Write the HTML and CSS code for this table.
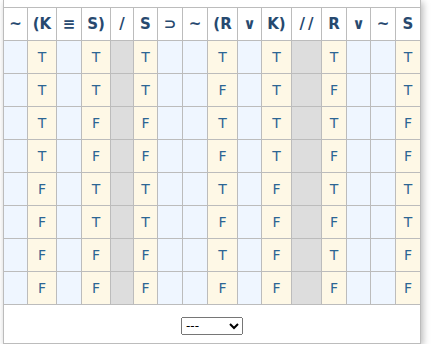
FILE: index.html
```html
<!DOCTYPE html>
<html>
<head>
<meta charset="utf-8">
<link rel="stylesheet" href="styles.css">
</head>
<body>
<div class="panel">
  <table class="truth">
    <colgroup>
      <col class="w24"><col class="w29"><col class="w25"><col class="w29"><col class="w23"><col class="w24"><col class="w25"><col class="w25">
      <col class="w30"><col class="w24"><col class="w30"><col class="w30"><col class="w25"><col class="w24"><col class="w25"><col class="w25">
    </colgroup>
    <thead>
      <tr>
        <th>~</th><th>(K</th><th class="sym">≡</th><th>S)</th><th>/</th><th>S</th><th class="sym">⊃</th><th>~</th>
        <th>(R</th><th class="sym">∨</th><th>K)</th><th class="wide">//</th><th>R</th><th class="sym">∨</th><th>~</th><th>S</th>
      </tr>
    </thead>
    <tbody>
      <tr><td class="o"></td><td class="v">T</td><td class="o"></td><td class="v">T</td><td class="d"></td><td class="v">T</td><td class="o"></td><td class="o"></td><td class="v">T</td><td class="o"></td><td class="v">T</td><td class="d"></td><td class="v">T</td><td class="o"></td><td class="o"></td><td class="v">T</td></tr>
      <tr><td class="o"></td><td class="v">T</td><td class="o"></td><td class="v">T</td><td class="d"></td><td class="v">T</td><td class="o"></td><td class="o"></td><td class="v">F</td><td class="o"></td><td class="v">T</td><td class="d"></td><td class="v">F</td><td class="o"></td><td class="o"></td><td class="v">T</td></tr>
      <tr><td class="o"></td><td class="v">T</td><td class="o"></td><td class="v">F</td><td class="d"></td><td class="v">F</td><td class="o"></td><td class="o"></td><td class="v">T</td><td class="o"></td><td class="v">T</td><td class="d"></td><td class="v">T</td><td class="o"></td><td class="o"></td><td class="v">F</td></tr>
      <tr><td class="o"></td><td class="v">T</td><td class="o"></td><td class="v">F</td><td class="d"></td><td class="v">F</td><td class="o"></td><td class="o"></td><td class="v">F</td><td class="o"></td><td class="v">T</td><td class="d"></td><td class="v">F</td><td class="o"></td><td class="o"></td><td class="v">F</td></tr>
      <tr><td class="o"></td><td class="v">F</td><td class="o"></td><td class="v">T</td><td class="d"></td><td class="v">T</td><td class="o"></td><td class="o"></td><td class="v">T</td><td class="o"></td><td class="v">F</td><td class="d"></td><td class="v">T</td><td class="o"></td><td class="o"></td><td class="v">T</td></tr>
      <tr><td class="o"></td><td class="v">F</td><td class="o"></td><td class="v">T</td><td class="d"></td><td class="v">T</td><td class="o"></td><td class="o"></td><td class="v">F</td><td class="o"></td><td class="v">F</td><td class="d"></td><td class="v">F</td><td class="o"></td><td class="o"></td><td class="v">T</td></tr>
      <tr><td class="o"></td><td class="v">F</td><td class="o"></td><td class="v">F</td><td class="d"></td><td class="v">F</td><td class="o"></td><td class="o"></td><td class="v">T</td><td class="o"></td><td class="v">F</td><td class="d"></td><td class="v">T</td><td class="o"></td><td class="o"></td><td class="v">F</td></tr>
      <tr><td class="o"></td><td class="v">F</td><td class="o"></td><td class="v">F</td><td class="d"></td><td class="v">F</td><td class="o"></td><td class="o"></td><td class="v">F</td><td class="o"></td><td class="v">F</td><td class="d"></td><td class="v">F</td><td class="o"></td><td class="o"></td><td class="v">F</td></tr>
    </tbody>
  </table>
  <div class="controls">
    <select class="picker">
      <option>---</option>
    </select>
  </div>
</div>
</body>
</html>
```

FILE: styles.css
```css
html, body {
  margin: 0;
  padding: 0;
  background: #ffffff;
}

/* card holding the truth table and the operator picker */
.panel {
  margin-left: 3px;
  width: 416px;
  border: 1px solid #bcbcbc;
  border-top: none;
  padding-top: 7px;
  background: #ffffff;
  box-shadow: 2px 2px 7px rgba(0, 0, 0, 0.28);
}

.truth {
  table-layout: fixed;
  border-collapse: collapse;
  width: 418px;
  margin: 0 -1px;
  font-family: "DejaVu Sans", Verdana, sans-serif;
}

.w23 { width: 23px; }
.w24 { width: 24px; }
.w25 { width: 25px; }
.w29 { width: 29px; }
.w30 { width: 30px; }

.truth th,
.truth td {
  border: 1px solid #bcbcbc;
  padding: 0;
  height: 32px;
  text-align: center;
  vertical-align: middle;
}

.truth th {
  background: #ffffff;
  color: #27496f;
  font-size: 15px;
  font-weight: bold;
  white-space: nowrap;
}

.truth th.wide {
  letter-spacing: 3px;
  text-indent: 3px;
}

.truth td {
  font-size: 14px;
  color: #2c6594;
}

/* value columns, connective columns and argument dividers */
.truth td.v { background: #fef8e6; }
.truth td.o { background: #eff6ff; }
.truth td.d { background: #dddddd; }

.controls {
  display: flex;
  justify-content: center;
  align-items: flex-start;
  box-sizing: border-box;
  height: 38px;
  padding-top: 12px;
}

.picker {
  width: 62px;
  height: 18px;
  font-family: "DejaVu Sans", Verdana, sans-serif;
  font-size: 12px;
}
```
